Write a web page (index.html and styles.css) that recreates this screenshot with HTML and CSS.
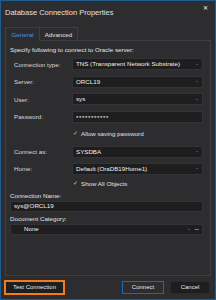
FILE: index.html
```html
<!DOCTYPE html>
<html>
<head>
<meta charset="utf-8">
<link rel="stylesheet" href="styles.css">
</head>
<body>
<div class="window">
  <div class="titlebar">
    <span class="title">Database Connection Properties</span>
    <span class="close">&#x2715;</span>
  </div>
  <div class="tabs">
    <div class="tab active">General</div>
    <div class="tab">Advanced</div>
    <div class="tabfill"></div>
  </div>
  <div class="panel">
    <div class="intro">Specify following to connect to Oracle server:</div>
    <div class="row r1"><span class="label">Connection type:</span><div class="field combo"><span>TNS (Transparent Network Substrate)</span><i class="arrow"></i></div></div>
    <div class="row r2"><span class="label">Server:</span><div class="field combo"><span>ORCL19</span><i class="arrow"></i></div></div>
    <div class="row r3"><span class="label">User:</span><div class="field combo"><span>sys</span><i class="arrow"></i></div></div>
    <div class="row r4"><span class="label">Password:</span><div class="field"><span class="pw">***********</span></div></div>
    <div class="check c1"><span class="box">&#x2713;</span><span>Allow saving password</span></div>
    <div class="row r5"><span class="label">Connect as:</span><div class="field combo"><span>SYSDBA</span><i class="arrow"></i></div></div>
    <div class="row r6"><span class="label">Home:</span><div class="field combo"><span>Default (OraDB19Home1)</span><i class="arrow"></i></div></div>
    <div class="check c2"><span class="box">&#x2713;</span><span>Show All Objects</span></div>
    <div class="flabel l1">Connection Name:</div>
    <div class="field wide"><span>sys@ORCL19</span></div>
    <div class="flabel l2">Document Category:</div>
    <div class="field wide combo cat"><span>None</span><i class="arrow"></i><span class="dots">&#x2022;&#x2022;&#x2022;</span></div>
  </div>
  <div class="buttons">
    <div class="btn test">Test Connection</div>
    <div class="spacer"></div>
    <div class="btn connect">Connect</div>
    <div class="btn cancel">Cancel</div>
  </div>
</div>
</body>
</html>
```
FILE: styles.css
```css
html, body {
  margin: 0;
  padding: 0;
  background: #2d2d30;
}
body {
  font-family: "Liberation Sans", Arial, sans-serif;
  color: #e6e6e6;
}
.window {
  box-sizing: border-box;
  width: 216px;
  height: 300px;
  border: 1px solid #1f5d8f;
  background: #2d2d30;
  display: flex;
  flex-direction: column;
}
.titlebar {
  height: 26px;
  display: flex;
  align-items: flex-start;
  justify-content: space-between;
}
.title {
  font-size: 7.5px;
  color: #e0e0e0;
  margin: 7px 0 0 4px;
  line-height: 9px;
}
.close {
  font-size: 6px;
  color: #d0d0d0;
  margin: 3px 7px 0 0;
  line-height: 8px;
  font-weight: bold;
}
.tabs {
  display: flex;
  height: 14px;
  margin: 0 4px;
}
.tab {
  box-sizing: border-box;
  font-size: 6.2px;
  line-height: 13px;
  border: 1px solid #3f3f46;
  border-bottom: none;
  color: #e0e0e0;
  text-align: center;
}
.tab.active {
  width: 34px;
  color: #3d9be9;
  border-right: none;
}
.tab:not(.active) {
  width: 39px;
  border-bottom: 1px solid #3f3f46;
}
.tabfill {
  flex: 1;
  border-bottom: 1px solid #3f3f46;
}
.panel {
  box-sizing: border-box;
  margin: 0 4px;
  height: 235px;
  border: 1px solid #3f3f46;
  border-top: none;
  padding: 4px 7px 0 4px;
  font-size: 6.2px;
}
.intro {
  line-height: 10px;
  color: #e6e6e6;
}
.row {
  display: flex;
  align-items: center;
  height: 12px;
}
.label {
  width: 58px;
  padding-left: 4px;
  color: #d8d8d8;
}
.field {
  box-sizing: border-box;
  flex: 1;
  height: 12px;
  background: #1e1e1e;
  border: 1px solid #333337;
  display: flex;
  align-items: center;
  padding-left: 3px;
  color: #f0f0f0;
  position: relative;
}
.field span { line-height: 10px; }
.field .pw {
  letter-spacing: 0.6px;
  line-height: 8px;
  padding-top: 2px;
}
.arrow {
  position: absolute;
  right: 4px;
  top: 4.5px;
  width: 0;
  height: 0;
  border-left: 1.5px solid transparent;
  border-right: 1.5px solid transparent;
  border-top: 1.5px solid #7a7a7a;
}
.r1 { margin-top: 3px; }
.r2 { margin-top: 5.5px; }
.r3 { margin-top: 5.5px; }
.r4 { margin-top: 5.5px; }
.check {
  display: flex;
  align-items: center;
  height: 10px;
  padding-left: 62px;
  color: #e0e0e0;
}
.box {
  width: 7px;
  height: 7px;
  font-size: 6px;
  line-height: 7px;
  text-align: center;
  color: #c8c8c8;
  margin-right: 2px;
}
.c1 { margin-top: 5.5px; }
.r5 { margin-top: 7.5px; }
.r6 { margin-top: 5px; }
.c2 { margin-top: 4px; }
.flabel {
  line-height: 10px;
  color: #e0e0e0;
}
.l1 { margin-top: 2px; }
.l2 { margin-top: 2px; }
.wide {
  flex: none;
  height: 11px;
}
.cat span:first-child { padding-left: 10px; }
.cat .arrow { right: 12px; top: 4px; }
.dots {
  position: absolute;
  right: 3px;
  top: 0;
  font-size: 3.5px;
  letter-spacing: 0.2px;
  color: #cfcfcf;
}
.buttons {
  display: flex;
  align-items: center;
  margin: 4px 5px 0 3px;
  gap: 6px;
}
.spacer { flex: 1; }
.btn {
  box-sizing: border-box;
  font-size: 6px;
  text-align: center;
  color: #e6e6e6;
}
.test {
  width: 61px;
  height: 15px;
  line-height: 11px;
  border: 2px solid #f07c1e;
  background: #1e1e1e;
}
.connect {
  width: 42px;
  height: 13px;
  line-height: 11px;
  border: 1px solid #1e6aa6;
  background: #2d2d30;
}
.cancel {
  width: 40px;
  height: 13px;
  line-height: 11px;
  border: 1px solid #2a2a2c;
  background: #1e1e1e;
}
```
